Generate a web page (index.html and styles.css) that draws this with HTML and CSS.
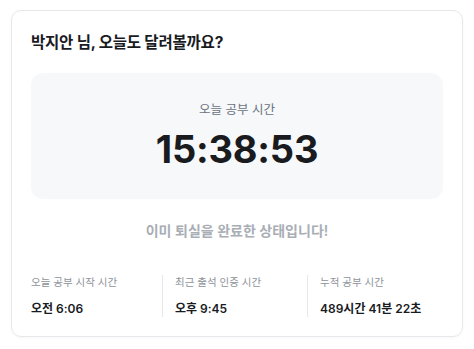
FILE: index.html
```html
<!DOCTYPE html>
<html lang="ko">
<head>
    <meta charset="UTF-8">
    <meta name="viewport" content="width=device-width, initial-scale=1.0">
    <title>오늘 공부 시간</title>
    <link rel="stylesheet" href="styles.css">
</head>
<body>

<main class="study-card">
    <h1 class="greeting">박지안 님, 오늘도 달려볼까요?</h1>

    <section class="timer-panel">
        <p class="timer-label">오늘 공부 시간</p>
        <p class="timer-value">15:38:53</p>
    </section>

    <p class="status-text">이미 퇴실을 완료한 상태입니다!</p>

    <div class="stats">
        <div class="stat">
            <span class="stat-label">오늘 공부 시작 시간</span>
            <span class="stat-value">오전 6:06</span>
        </div>
        <div class="stat">
            <span class="stat-label">최근 출석 인증 시간</span>
            <span class="stat-value">오후 9:45</span>
        </div>
        <div class="stat">
            <span class="stat-label">누적 공부 시간</span>
            <span class="stat-value">489시간 41분 22초</span>
        </div>
    </div>
</main>

</body>
</html>
```

FILE: styles.css
```css
/* Basic Reset */
*,
*::before,
*::after {
    box-sizing: border-box;
    margin: 0;
    padding: 0;
}

:root {
    --bg-main: #ffffff;
    --card-border: #e6e8eb;
    --panel-bg: #f7f8fa;
    --text-strong: #191b1f;
    --text-muted: #6b7280;
    --text-faint: #a9aeb5;
    --text-label: #8e939a;
    --divider: #e5e7eb;
}

body {
    font-family: Inter, "Noto Sans CJK KR", sans-serif;
    background-color: var(--bg-main);
    color: var(--text-strong);
    padding: 10px 11px;
}

.study-card {
    width: 452px;
    height: 327px;
    border: 1px solid var(--card-border);
    border-radius: 10px;
    padding: 22px 19px 0;
    box-shadow: 0 1px 3px rgba(0, 0, 0, 0.04);
}

.greeting {
    font-size: 15.5px;
    font-weight: 700;
    line-height: 20px;
    letter-spacing: -0.2px;
}

.timer-panel {
    margin-top: 20px;
    height: 126px;
    background-color: var(--panel-bg);
    border-radius: 12px;
    display: flex;
    flex-direction: column;
    align-items: center;
    padding-top: 29px;
}

.timer-label {
    font-size: 12.5px;
    color: var(--text-muted);
    line-height: 16px;
}

.timer-value {
    margin-top: 8px;
    font-size: 38px;
    font-weight: 700;
    line-height: 46px;
    letter-spacing: -0.2px;
}

.status-text {
    margin-top: 22px;
    text-align: center;
    font-size: 14px;
    font-weight: 600;
    color: var(--text-faint);
    line-height: 20px;
}

/* Bottom stats row */
.stats {
    margin-top: 34px;
    display: grid;
    grid-template-columns: 131px 145px 1fr;
}

.stat {
    display: flex;
    flex-direction: column;
    gap: 10px;
}

.stat + .stat {
    border-left: 1px solid var(--divider);
    padding-left: 12px;
}

.stat-label {
    font-size: 10.5px;
    color: var(--text-label);
    line-height: 15px;
}

.stat-value {
    font-size: 12px;
    font-weight: 600;
    line-height: 17px;
    color: var(--text-strong);
}
```
